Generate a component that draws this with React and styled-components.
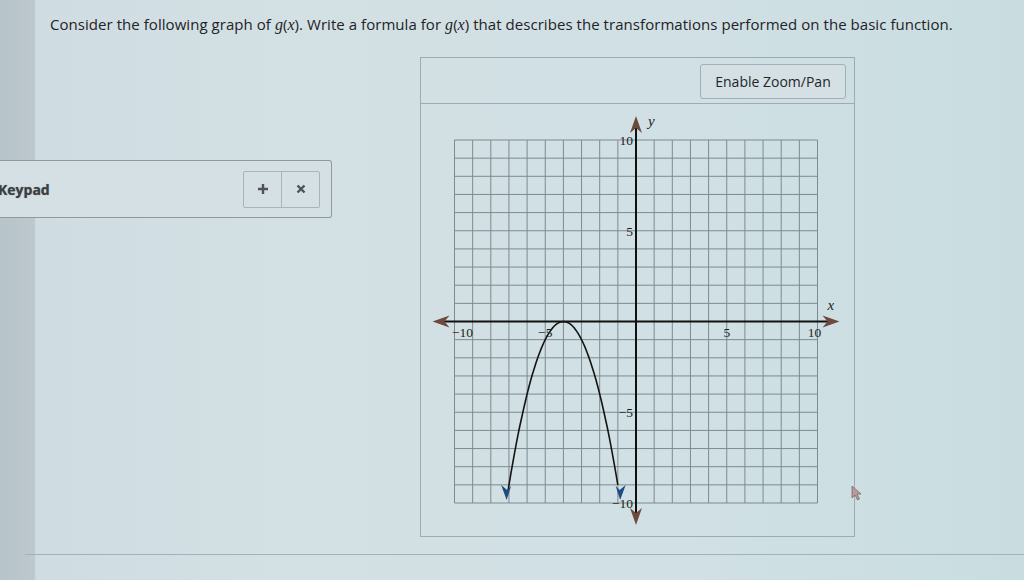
import React from "react";
import styled, { createGlobalStyle } from "styled-components";

const GlobalStyle = createGlobalStyle`
  html, body { margin: 0; padding: 0; }
  body {
    width: 1024px;
    height: 580px;
    overflow: hidden;
    font-family: "Open Sans", "Liberation Sans", sans-serif;
    background: #d2dfe3;
  }
`;

const Page = styled.div`
  position: relative;
  width: 1024px;
  height: 580px;
  overflow: hidden;
  background: linear-gradient(
    to right,
    #b7c4ca 0,
    #bcc8ce 34px,
    #cfdce1 36px,
    #d3e0e4 300px,
    #d0e0e4 700px,
    #c9dde1 1024px
  );
  display: flex;
  flex-direction: column;
`;

const Title = styled.div`
  padding: 14px 0 0 50px;
  height: 27px;
  font-size: 15px;
  color: #1f2326;
  letter-spacing: 0.05px;
  white-space: nowrap;
`;

const MathVar = styled.span`
  font-family: "Liberation Serif", "DejaVu Serif", serif;
  font-style: italic;
  font-size: 16px;
`;

const Body = styled.div`
  display: flex;
  align-items: flex-start;
  margin-top: 16px;
`;

const KeypadBar = styled.div`
  margin-top: 103px;
  width: 332px;
  height: 58px;
  flex-shrink: 0;
  box-sizing: border-box;
  border: 1px solid #8d9ba1;
  border-left: none;
  border-radius: 0 3px 3px 0;
  background: #d5e0e4;
  display: flex;
  align-items: center;
  justify-content: space-between;
  padding-right: 11px;
`;

const KeypadLabel = styled.span`
  font-size: 14px;
  font-weight: 700;
  color: #3b3f42;
  text-shadow: 0 0 1px #6d7275;
  margin-left: -2px;
`;

const KeyGroup = styled.div`
  display: flex;
  border: 1px solid #a7b4ba;
  border-radius: 2px;
`;

const KeyButton = styled.div`
  width: 37px;
  height: 35px;
  display: flex;
  align-items: center;
  justify-content: center;
  border-left: ${(p) => (p.$first ? "none" : "1px solid #a7b4ba")};
`;

const Panel = styled.div`
  margin-left: 88px;
  width: 435px;
  height: 480px;
  flex-shrink: 0;
  box-sizing: border-box;
  border: 1px solid #9eabb1;
  display: flex;
  flex-direction: column;
  overflow: hidden;
`;

const PanelHeader = styled.div`
  height: 45px;
  flex-shrink: 0;
  border-bottom: 1px solid #9eabb1;
  display: flex;
  align-items: center;
  justify-content: flex-end;
  padding-right: 8px;
`;

const ZoomButton = styled.div`
  width: 146px;
  height: 35px;
  margin-top: 2px;
  box-sizing: border-box;
  border: 1px solid #a2afb5;
  border-radius: 3px;
  background: #d4e0e4;
  display: flex;
  align-items: center;
  justify-content: center;
  font-size: 14px;
  color: #232629;
`;

const GraphArea = styled.div`
  flex: 1;
  min-height: 0;
`;

const BottomRule = styled.div`
  margin: 17px 0 0 25px;
  border-top: 1px solid #a3b2b8;
`;

const Cursor = styled.svg`
  position: absolute;
  left: 851px;
  top: 485px;
`;

const TickLabel = styled.text`
  font-family: "Liberation Serif", "DejaVu Serif", serif;
  font-size: 13.5px;
  fill: #1e1e1e;
  text-anchor: ${(p) => p.$anchor || "middle"};
`;

const AxisName = styled.text`
  font-family: "Liberation Serif", "DejaVu Serif", serif;
  font-style: italic;
  font-size: 15px;
  fill: #1e1e1e;
`;

const GridLine = styled.line`
  stroke: #7d8a8f;
  stroke-width: 1;
`;

const AxisLine = styled.line`
  stroke: #111;
  stroke-width: 2;
`;

const ArrowHead = styled.polygon`
  fill: ${(p) => (p.$blue ? "#1f4c80" : "#6e4a3c")};
`;

const Curve = styled.polyline`
  fill: none;
  stroke: #141414;
  stroke-width: 1.6;
`;

// graph constants in page coordinates
const OX = 421; // svg left in page
const OY = 104; // svg top in page
const X0 = 636;
const Y0 = 321.5;
const SX = 18.15;
const SY = 18.15;
const px = (x) => X0 + x * SX - OX;
const py = (y) => Y0 - y * SY - OY;

function Graph() {
  const lines = [];
  for (let i = -10; i <= 10; i++) {
    lines.push(<GridLine key={"v" + i} x1={px(i)} y1={py(10)} x2={px(i)} y2={py(-10)} />);
    lines.push(<GridLine key={"h" + i} x1={px(-10)} y1={py(i)} x2={px(10)} y2={py(i)} />);
  }
  const pts = [];
  for (let x = -7.1; x <= -0.9001; x += 0.1) {
    pts.push(`${px(x).toFixed(1)},${py(-(x + 4) * (x + 4)).toFixed(1)}`);
  }
  const xL = px(-10) - 22;
  const xR = px(10) + 22;
  const yT = py(10) - 24;
  const yB = py(-10) + 22;
  const ax = px(0);
  const ay = py(0);
  const lEnd = { x: px(-7.1), y: py(-9.61) };
  const rEnd = { x: px(-0.9), y: py(-9.61) };
  return (
    <svg width="433" height="433" viewBox="0 0 433 433">
      {lines}
      <AxisLine x1={xL + 8} y1={ay} x2={xR - 8} y2={ay} />
      <AxisLine x1={ax} y1={yT + 8} x2={ax} y2={yB - 8} />
      <ArrowHead points={`${xL},${ay} ${xL + 17},${ay - 6} ${xL + 12},${ay} ${xL + 17},${ay + 6}`} />
      <ArrowHead points={`${xR},${ay} ${xR - 17},${ay - 6} ${xR - 12},${ay} ${xR - 17},${ay + 6}`} />
      <ArrowHead points={`${ax},${yT} ${ax - 6},${yT + 17} ${ax},${yT + 12} ${ax + 6},${yT + 17}`} />
      <ArrowHead points={`${ax},${yB} ${ax - 6},${yB - 17} ${ax},${yB - 12} ${ax + 6},${yB - 17}`} />
      <Curve points={pts.join(" ")} />
      <ArrowHead
        $blue
        points={`${lEnd.x - 0.5},${lEnd.y + 4} ${lEnd.x - 6},${lEnd.y - 11} ${lEnd.x},${lEnd.y - 6} ${lEnd.x + 4},${lEnd.y - 10}`}
      />
      <ArrowHead
        $blue
        points={`${rEnd.x + 0.5},${rEnd.y + 4} ${rEnd.x - 4},${rEnd.y - 10} ${rEnd.x},${rEnd.y - 6} ${rEnd.x + 6},${rEnd.y - 11}`}
      />
      <TickLabel $anchor="end" x={ax - 3} y={py(10) + 5}>10</TickLabel>
      <TickLabel $anchor="end" x={ax - 3} y={py(5) + 5}>5</TickLabel>
      <TickLabel $anchor="end" x={ax - 3} y={py(-5) + 5}>−5</TickLabel>
      <TickLabel $anchor="end" x={ax - 3} y={py(-10) + 5}>−10</TickLabel>
      <TickLabel x={px(-10) + 8} y={ay + 15}>−10</TickLabel>
      <TickLabel x={px(-5)} y={ay + 15}>−5</TickLabel>
      <TickLabel x={px(5)} y={ay + 15}>5</TickLabel>
      <TickLabel x={px(10) - 3} y={ay + 15}>10</TickLabel>
      <AxisName x={px(10) + 10} y={ay - 12}>x</AxisName>
      <AxisName x={ax + 12} y={py(10) - 14}>y</AxisName>
    </svg>
  );
}

export default function App() {
  return (
    <>
      <GlobalStyle />
      <Page>
        <Title>
          Consider the following graph of <MathVar>g</MathVar>(<MathVar>x</MathVar>). Write a formula for{" "}
          <MathVar>g</MathVar>(<MathVar>x</MathVar>) that describes the transformations performed on the basic function.
        </Title>
        <Body>
          <KeypadBar>
            <KeypadLabel>Keypad</KeypadLabel>
            <KeyGroup>
              <KeyButton $first>
                <svg width="12" height="12" viewBox="0 0 12 12">
                  <path d="M6 1v10M1 6h10" stroke="#4f5356" strokeWidth="2.4" />
                </svg>
              </KeyButton>
              <KeyButton>
                <svg width="10" height="10" viewBox="0 0 10 10">
                  <path d="M1.5 1.5l7 7M8.5 1.5l-7 7" stroke="#4f5356" strokeWidth="2.4" />
                </svg>
              </KeyButton>
            </KeyGroup>
          </KeypadBar>
          <Panel>
            <PanelHeader>
              <ZoomButton>Enable Zoom/Pan</ZoomButton>
            </PanelHeader>
            <GraphArea>
              <Graph />
            </GraphArea>
          </Panel>
        </Body>
        <BottomRule />
        <Cursor width="12" height="16" viewBox="0 0 12 16">
          <path d="M1 1v12l3-3 2.5 5 2-1-2.5-5h4z" fill="#b89a98" stroke="#7a6a6a" strokeWidth="0.8" />
        </Cursor>
      </Page>
    </>
  );
}
